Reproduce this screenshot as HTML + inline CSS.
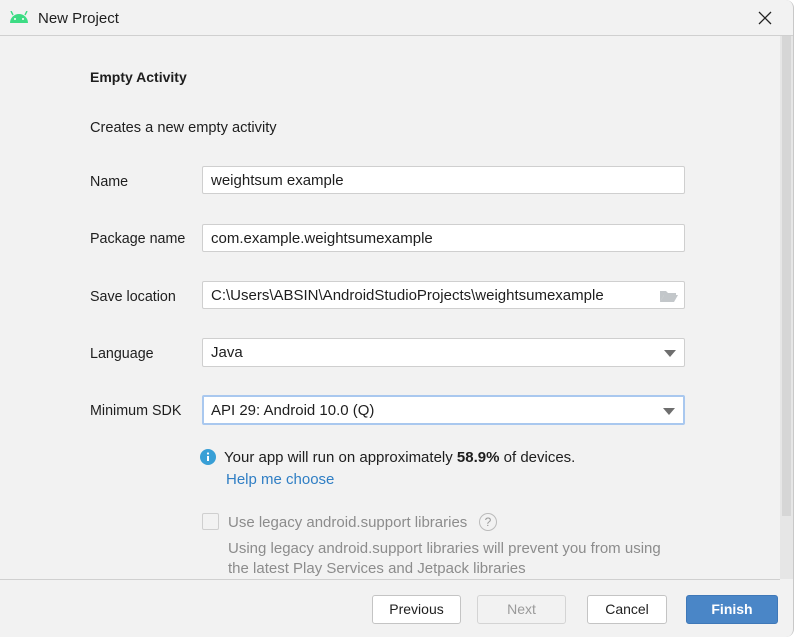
<!DOCTYPE html><html><head><style>
body{margin:0;width:797px;height:637px;background:#fff;font-family:"Liberation Sans",sans-serif;font-size:14px;color:#1e1e1e;position:relative;overflow:hidden}
.win{position:absolute;left:0;top:0;width:793px;height:637px;background:#f2f2f2;border-right:1px solid #c8c8c8;border-radius:0 8px 8px 0}
.a{position:absolute}
.f{position:absolute;left:202px;width:483px;height:28px;background:#fff;border:1px solid #cfcfcf;border-radius:2px;box-sizing:border-box;padding-left:8px;line-height:27px;font-size:15px}
.lbl{position:absolute;left:90px;font-size:14.3px}
.arr{position:absolute;right:8px;top:11px;width:0;height:0;border-left:6px solid transparent;border-right:6px solid transparent;border-top:7px solid #6e6e6e}
.b{position:absolute;top:595px;height:29px;box-sizing:border-box;border:1px solid #c4c4c4;border-radius:3px;background:#fff;text-align:center;line-height:27px;font-size:14px}
</style></head><body><div class="win">
<svg class="a" style="left:9px;top:11px" width="20" height="13" viewBox="0 0 20 13"><path d="M1 12 A9 9 0 0 1 19 12 Z" fill="#3ddc84"/><path d="M4 4 L2 0 M16 4 L18 0" stroke="#3ddc84" stroke-width="1.4"/><circle cx="6" cy="8" r="1" fill="#fff"/><circle cx="14" cy="8" r="1" fill="#fff"/></svg>
<div class="a" style="left:38px;top:10px;font-size:15px">New Project</div>
<svg class="a" style="left:758px;top:11px" width="14" height="14"><path d="M1 1L13 13M13 1L1 13" stroke="#222" stroke-width="1.3"/></svg>
<div class="a" style="left:0;top:35px;width:793px;height:1px;background:#d0d0d0"></div>
<div class="a" style="left:780px;top:36px;width:13px;height:543px;background:#e6e6e6"></div>
<div class="a" style="left:782px;top:36px;width:9px;height:480px;background:#d6d6d6"></div>
<div class="a" style="left:90px;top:69px;font-weight:bold">Empty Activity</div>
<div class="a" style="left:90px;top:120px;font-size:14.6px">Creates a new empty activity</div>
<div class="lbl" style="top:174px">Name</div><div class="f" style="top:166px">weightsum example</div>
<div class="lbl" style="top:231px">Package name</div><div class="f" style="top:224px">com.example.weightsumexample</div>
<div class="lbl" style="top:289px">Save location</div><div class="f" style="top:281px">C:\Users\ABSIN\AndroidStudioProjects\weightsumexample
<svg class="a" style="right:6px;top:7px" width="18" height="13"><path d="M0 2h6l2 2h8v2H4L0 13Z" fill="#c3c7ca"/><path d="M4 6h14l-4 7H0Z" fill="#c3c7ca"/></svg></div>
<div class="lbl" style="top:346px">Language</div><div class="f" style="top:338px;height:29px;line-height:28px">Java<div class="arr"></div></div>
<div class="lbl" style="top:403px">Minimum SDK</div><div class="f" style="top:395px;height:30px;line-height:27px;border:2px solid #a9c8ef;padding-left:7px">API 29: Android 10.0 (Q)<div class="arr"></div></div>
<svg class="a" style="left:200px;top:449px" width="16" height="16"><circle cx="8" cy="8" r="8" fill="#389fd6"/><rect x="7" y="7" width="2" height="5" fill="#fff"/><circle cx="8" cy="4.5" r="1.1" fill="#fff"/></svg>
<div class="a" style="left:224px;top:449px;font-size:15px">Your app will run on approximately <b>58.9%</b> of devices.</div>
<div class="a" style="left:226px;top:471px;color:#2f7ec4;font-size:15px">Help me choose</div>
<div class="a" style="left:202px;top:513px;width:17px;height:17px;border:1px solid #cfcfcf;border-radius:2px;box-sizing:border-box;background:#f2f2f2"></div>
<div class="a" style="left:228px;top:514px;color:#8c8c8c;font-size:15px">Use legacy android.support libraries</div>
<div class="a" style="left:479px;top:513px;width:18px;height:18px;border:1px solid #bbb;border-radius:50%;box-sizing:border-box;font-size:12px;text-align:center;line-height:16px;color:#999">?</div>
<div class="a" style="left:228px;top:539px;color:#8c8c8c;line-height:20px;font-size:15px">Using legacy android.support libraries will prevent you from using<br>the latest Play Services and Jetpack libraries</div>
<div class="a" style="left:0;top:579px;width:780px;height:1px;background:#d0d0d0"></div>
<div class="b" style="left:372px;width:89px">Previous</div>
<div class="b" style="left:477px;width:89px;background:#f2f2f2;color:#9a9a9a;border-color:#d4d4d4">Next</div>
<div class="b" style="left:587px;width:80px">Cancel</div>
<div class="b" style="left:686px;width:92px;background:#4a86c7;border-color:#3f78b8;color:#fff;font-weight:bold">Finish</div>
</div></body></html>
